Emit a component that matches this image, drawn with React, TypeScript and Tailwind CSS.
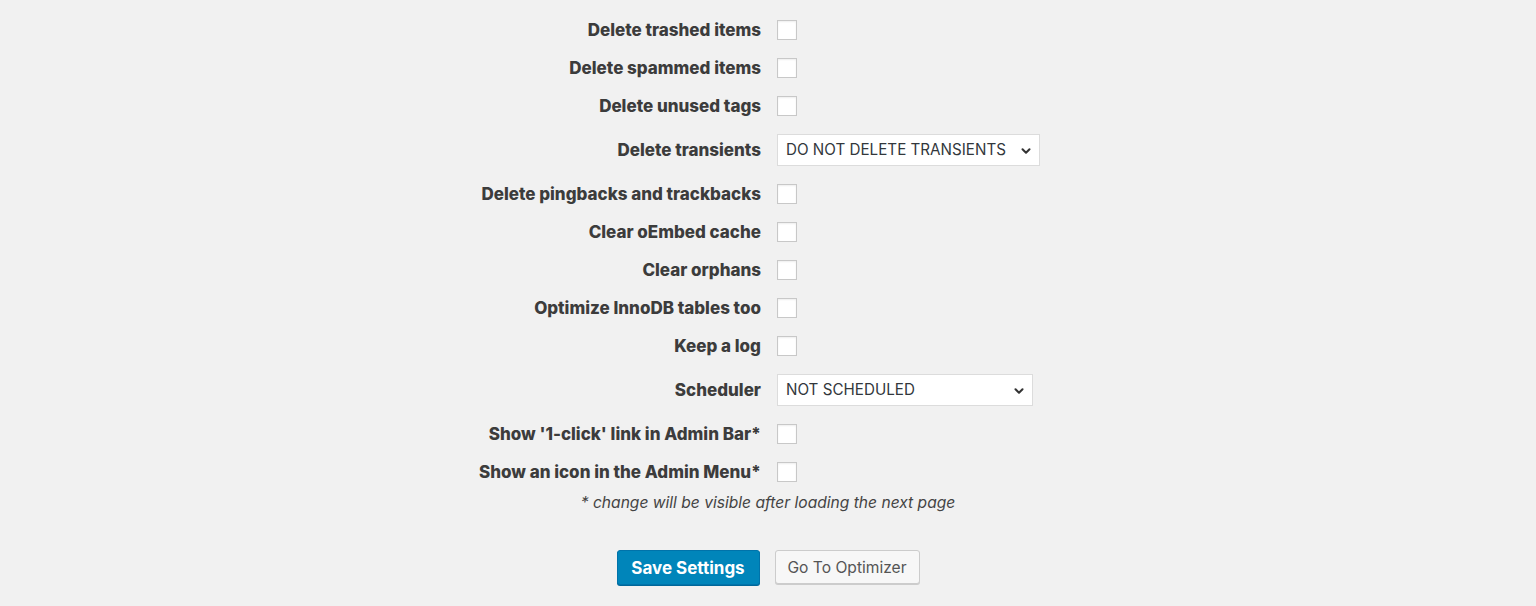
import { ChevronDown } from "lucide-react";

type Row =
  | { kind: "check"; label: string }
  | { kind: "select"; label: string; value: string; width: string };

const rows: Row[] = [
  { kind: "check", label: "Delete trashed items" },
  { kind: "check", label: "Delete spammed items" },
  { kind: "check", label: "Delete unused tags" },
  { kind: "select", label: "Delete transients", value: "DO NOT DELETE TRANSIENTS", width: "w-[263px]" },
  { kind: "check", label: "Delete pingbacks and trackbacks" },
  { kind: "check", label: "Clear oEmbed cache" },
  { kind: "check", label: "Clear orphans" },
  { kind: "check", label: "Optimize InnoDB tables too" },
  { kind: "check", label: "Keep a log" },
  { kind: "select", label: "Scheduler", value: "NOT SCHEDULED", width: "w-[256px]" },
  { kind: "check", label: "Show '1-click' link in Admin Bar*" },
  { kind: "check", label: "Show an icon in the Admin Menu*" },
];

function SettingRow({ row }: { row: Row }) {
  const isSelect = row.kind === "select";
  return (
    <div className={isSelect ? "flex h-[50px] items-center" : "flex h-[38px] items-center"}>
      <div className="w-1/2 pr-[7px] pt-[1px] text-right text-[17px] font-extrabold text-[#3c3c3c]">
        {row.label}
      </div>
      <div className="w-1/2 pl-[9px]">
        {row.kind === "check" ? (
          <div className="h-[20px] w-[20px] border border-[#c8c8c8] bg-white shadow-[inset_0_1px_2px_rgba(0,0,0,0.07)]" />
        ) : (
          <div
            className={`flex h-[32px] ${row.width} items-center whitespace-nowrap border border-[#dcdcdc] bg-white pl-[8px] pr-[6px] pt-[1px] text-[15.2px] text-[#32373c]`}
          >
            <span>{row.value}</span>
            <ChevronDown className="ml-auto h-[14px] w-[14px] shrink-0 text-[#333]" strokeWidth={3.5} />
          </div>
        )}
      </div>
    </div>
  );
}

export default function App() {
  return (
    <div className="min-h-[606px] bg-[#f1f1f1] pt-[11px] font-['Inter',_'Liberation_Sans',_sans-serif]">
      {rows.map((row) => (
        <SettingRow key={row.label} row={row} />
      ))}
      <p className="text-center text-[15.6px] italic text-[#444]">
        * change will be visible after loading the next page
      </p>
      <div className="mt-[36px] flex justify-center gap-[15px]">
        <button className="h-[35px] w-[143px] rounded-[3px] border border-[#0073aa] bg-[#0085ba] pt-[1px] text-[17px] font-bold text-white shadow-[0_1px_0_#006799]">
          Save Settings
        </button>
        <button className="h-[34px] w-[145px] rounded-[3px] border border-[#cccccc] bg-[#f7f7f7] pt-[1px] text-[15.6px] text-[#555] shadow-[0_1px_0_#cccccc]">
          Go To Optimizer
        </button>
      </div>
    </div>
  );
}
